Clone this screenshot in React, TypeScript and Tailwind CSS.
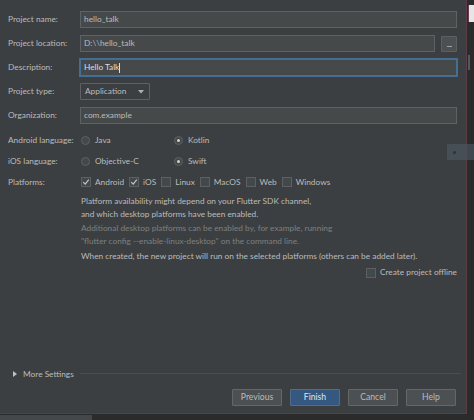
import { ReactNode } from 'react';

const font = { fontFamily: 'Lato, "Noto Sans", sans-serif' };

function Label({ children }: { children: ReactNode }) {
  return <div className="w-[72px] shrink-0 whitespace-nowrap text-[#bbbbbb]">{children}</div>;
}

function Field({ value, className = '' }: { value: string; className?: string }) {
  return (
    <div className={`h-[17px] flex items-center px-[3px] bg-[#45494a] border border-[#5e6263] text-[#bbbbbb] ${className}`}>
      {value}
    </div>
  );
}

function Radio({ checked, label, className = '' }: { checked?: boolean; label: string; className?: string }) {
  return (
    <div className={`flex items-center gap-[5px] ${className}`}>
      <span className="w-[9px] h-[9px] rounded-full border border-[#5d6061] bg-[#43494a] flex items-center justify-center">
        {checked && <span className="w-[3px] h-[3px] rounded-full bg-[#d0d0d0]" />}
      </span>
      <span>{label}</span>
    </div>
  );
}

function Check({ checked, label }: { checked?: boolean; label: string }) {
  return (
    <div className="flex items-center gap-[4px]">
      <span className="w-[10px] h-[10px] border border-[#5d6061] bg-[#43494a] flex items-center justify-center">
        {checked && (
          <svg width="8" height="8" viewBox="0 0 8 8">
            <path d="M1.2 4.2 L3.2 6.2 L6.8 1.6" fill="none" stroke="#c8c8c8" strokeWidth="1.1" />
          </svg>
        )}
      </span>
      <span>{label}</span>
    </div>
  );
}

function Btn({ children, primary }: { children: ReactNode; primary?: boolean }) {
  return (
    <div
      className={`w-[50px] h-[17px] flex items-center justify-center border rounded-[1px] text-[8.6px] ${
        primary ? 'bg-[#365880] border-[#4c708c] text-[#dfe6ee]' : 'bg-[#4c5052] border-[#646768] text-[#bbbbbb]'
      }`}
    >
      {children}
    </div>
  );
}

export default function App() {
  return (
    <div className="relative w-[474px] h-[420px] bg-[#2b2b2b] overflow-hidden text-[8.3px] leading-none" style={font}>
      {/* dialog */}
      <div className="w-[467px] h-[414px] bg-[#3c3f41] border-r border-b border-[#5b3d48] flex flex-col pl-[8px] pr-[9px] pt-[11px] pb-[7px]">
        <div className="flex flex-col gap-[7px]">
          <div className="flex items-center">
            <Label>Project name:</Label>
            <Field value="hello_talk" className="flex-1" />
          </div>
          <div className="flex items-center">
            <Label>Project location:</Label>
            <Field value="D:\\hello_talk" className="flex-1" />
            <div className="ml-[6px] w-[16px] h-[16px] bg-[#4c5052] border border-[#5e6060] rounded-[1px] flex items-end justify-center pb-[4px]">
              <span className="w-[5px] h-px bg-[#a0a0a0]" />
            </div>
          </div>
          <div className="flex items-center">
            <Label>Description:</Label>
            <div className="flex-1 h-[19px] -my-[1px] -mx-[1px] flex items-center px-[3px] bg-[#45494a] border-2 border-[#466d94] text-[#dddddd]">
              Hello Talk<span className="w-px h-[10px] bg-[#dddddd]" />
            </div>
          </div>
          <div className="flex items-center">
            <Label>Project type:</Label>
            <div className="w-[70px] h-[17px] flex items-center justify-between pl-[4px] pr-[5px] bg-[#3c3f41] border border-[#5e6263] text-[#bbbbbb] rounded-[1px]">
              <span>Application</span>
              <svg width="6" height="4" viewBox="0 0 6 4">
                <path d="M0 0 H6 L3 3.5 Z" fill="#b0b0b0" />
              </svg>
            </div>
          </div>
          <div className="flex items-center">
            <Label>Organization:</Label>
            <Field value="com.example" className="flex-1" />
          </div>
        </div>

        <div className="mt-[8px] flex flex-col text-[#bbbbbb]">
          <div className="h-[16px] flex items-center">
            <Label>Android language:</Label>
            <Radio label="Java" className="ml-[1px] w-[93px]" />
            <Radio checked label="Kotlin" />
          </div>
          <div className="h-[21px] mt-[3px] flex items-center">
            <Label>iOS language:</Label>
            <Radio label="Objective-C" className="ml-[1px] w-[93px]" />
            <Radio checked label="Swift" />
          </div>
          <div className="h-[16px] mt-[2px] flex items-center">
            <Label>Platforms:</Label>
            <div className="ml-[1px] flex items-center gap-[5px]">
              <Check checked label="Android" />
              <Check checked label="iOS" />
              <Check label="Linux" />
              <Check label="MacOS" />
              <Check label="Web" />
              <Check label="Windows" />
            </div>
          </div>
        </div>

        <div className="ml-[73px] mt-[5px] flex flex-col leading-[13px]">
          <div className="text-[#bbbbbb]">
            <div>Platform availability might depend on your Flutter SDK channel,</div>
            <div>and which desktop platforms have been enabled.</div>
          </div>
          <div className="mt-[1px] text-[#7d7f80]">
            <div>Additional desktop platforms can be enabled by, for example, running</div>
            <div>"flutter config --enable-linux-desktop" on the command line.</div>
          </div>
          <div className="mt-[2px] text-[#bbbbbb]">
            When created, the new project will run on the selected platforms (others can be added later).
          </div>
          <div className="mt-[3px] flex justify-end text-[#bbbbbb]">
            <Check label="Create project offline" />
          </div>
        </div>

        <div className="mt-auto flex items-center gap-[5px] text-[#bbbbbb]">
          <svg width="6" height="6" viewBox="0 0 6 6" className="ml-[4px]">
            <path d="M1 0 L5 3 L1 6 Z" fill="#c0c0c0" />
          </svg>
          <span>More Settings</span>
          <span className="flex-1 h-px bg-[#4b4e50] ml-[1px] -mr-[4px]" />
        </div>

        <div className="mt-[11px] flex justify-end gap-[8px] pr-[1px]">
          <Btn>Previous</Btn>
          <Btn primary>Finish</Btn>
          <Btn>Cancel</Btn>
          <Btn>Help</Btn>
        </div>
      </div>

      {/* background window bits peeking out on the right */}
      <div className="absolute right-0 top-[5px] w-[6px] h-[17px] bg-[#e6e6e6] border-l border-[#6b3f4f]" />
      <div className="absolute right-[4px] top-[55px] w-[2px] h-[15px] bg-[#55595b]" />
      <div className="absolute right-0 top-[144px] w-[27px] h-[16px] bg-[#4a5560]/70 flex items-center pl-[6px]">
        <span className="w-[3px] h-[3px] rounded-full bg-[#2e3338]" />
      </div>
      <div className="absolute left-0 bottom-0 w-[92px] h-[5px] bg-[#45484a]" />
    </div>
  );
}
